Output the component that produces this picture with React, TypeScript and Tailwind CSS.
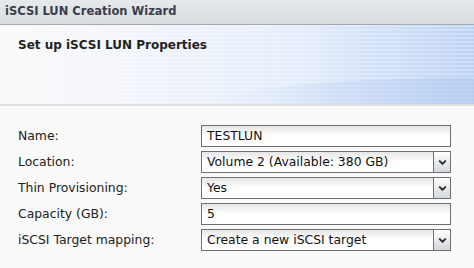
import { ChevronDown } from "lucide-react";

interface Field {
  label: string;
  value: string;
  select?: boolean;
}

const fields: Field[] = [
  { label: "Name:", value: "TESTLUN" },
  { label: "Location:", value: "Volume 2 (Available: 380 GB)", select: true },
  { label: "Thin Provisioning:", value: "Yes", select: true },
  { label: "Capacity (GB):", value: "5" },
  { label: "iSCSI Target mapping:", value: "Create a new iSCSI target", select: true },
];

function FieldBox({ field }: { field: Field }) {
  return (
    <div className="flex h-[22px] w-[250px] border border-[#707070] bg-white">
      <div className="flex flex-1 items-center bg-gradient-to-b from-[#e6e6e6] via-white to-white px-[5px] pt-[1px] text-[12.4px] text-[#111]">
        {field.value}
      </div>
      {field.select && (
        <div className="flex w-[17px] items-center justify-center border-l border-[#707070] bg-gradient-to-b from-white to-[#d4d8dc]">
          <ChevronDown className="h-[11px] w-[11px] text-[#333]" strokeWidth={4.5} />
        </div>
      )}
    </div>
  );
}

export default function App() {
  return (
    <div className="h-[268px] w-[474px] overflow-hidden bg-[#f9f9f9] font-['DejaVu_Sans',sans-serif]">
      <div className="flex h-[25px] items-center border-b border-[#a8a8a8] bg-gradient-to-b from-[#e7eaed] to-[#d9dcdf] px-[5px] text-[11.5px] font-bold text-[#3a3d4a]">
        iSCSI LUN Creation Wizard
      </div>
      <div className="relative h-[79px] bg-gradient-to-r from-[#fafafa] via-[#e6eefb] via-60% to-[#bcd3f4] px-[18px] pt-[11px] text-[12px] font-bold text-[#222]">
        <div className="absolute inset-0 bg-[repeating-linear-gradient(to_bottom,rgba(255,255,255,0.25)_0px,rgba(255,255,255,0.25)_2px,transparent_2px,transparent_4px)]" />
        <div className="absolute bottom-0 right-0 h-[26px] w-[260px] rounded-tl-[100%] bg-gradient-to-r from-transparent to-[#b3cbf0] opacity-60" />
        <div className="relative">Set up iSCSI LUN Properties</div>
      </div>
      <div className="h-[2px] bg-[#dedede]" />
      <div className="flex flex-col gap-[4px] pl-[18px] pt-[19px]">
        {fields.map((f) => (
          <div key={f.label} className="flex items-center">
            <div className="w-[183px] text-[12.4px] text-[#222]">{f.label}</div>
            <FieldBox field={f} />
          </div>
        ))}
      </div>
    </div>
  );
}
